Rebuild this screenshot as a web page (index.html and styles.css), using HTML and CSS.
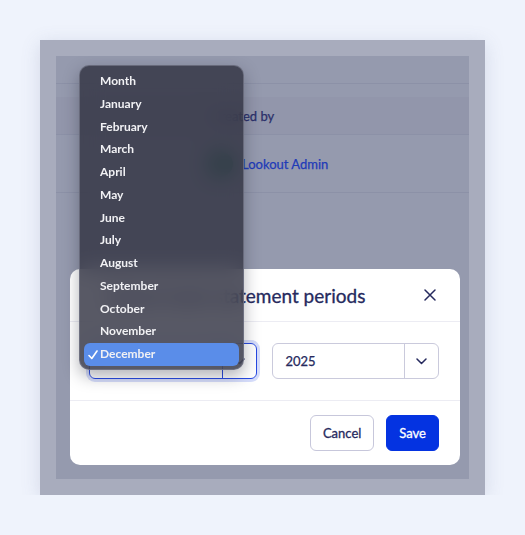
FILE: index.html
```html
<!DOCTYPE html>
<html lang="en">
<head>
	<meta charset="utf-8">
	<meta name="viewport" content="width=device-width, initial-scale=1.0">
	<link rel="stylesheet" href="styles.css">
	<title>Statements</title>
</head>
<body>
	<div class="window">
		<div class="app">
			<div class="toolbar"></div>
			<div class="table">
				<div class="table-head">
					<span class="col-by">Created by</span>
				</div>
				<div class="table-row">
					<span class="col-by">
						<span class="avatar"></span>
						<a class="user">Lookout Admin</a>
					</span>
				</div>
			</div>

			<!-- period picker dialog -->
			<div class="modal">
				<div class="modal-head">
					<h2>Export bank statement periods</h2>
					<button class="close" aria-label="Close">
						<svg width="12" height="12" viewBox="0 0 12 12"><path d="M1 1L11 11M11 1L1 11" stroke="#262a5e" stroke-width="1.5" stroke-linecap="round"/></svg>
					</button>
				</div>
				<div class="modal-body">
					<div class="select focused">
						<span class="select-value"></span>
						<span class="select-arrow">
							<svg width="11" height="7" viewBox="0 0 11 7"><path d="M1 1L5.5 5.5L10 1" fill="none" stroke="#262a5e" stroke-width="1.5" stroke-linecap="round" stroke-linejoin="round"/></svg>
						</span>
					</div>
					<div class="select">
						<span class="select-value">2025</span>
						<span class="select-arrow">
							<svg width="11" height="7" viewBox="0 0 11 7"><path d="M1 1L5.5 5.5L10 1" fill="none" stroke="#262a5e" stroke-width="1.5" stroke-linecap="round" stroke-linejoin="round"/></svg>
						</span>
					</div>
				</div>
				<div class="modal-foot">
					<button class="btn btn-secondary">Cancel</button>
					<button class="btn btn-primary">Save</button>
				</div>
			</div>

			<!-- native month list, opened -->
			<ul class="menu">
				<li>Month</li>
				<li>January</li>
				<li>February</li>
				<li>March</li>
				<li>April</li>
				<li>May</li>
				<li>June</li>
				<li>July</li>
				<li>August</li>
				<li>September</li>
				<li>October</li>
				<li>November</li>
				<li class="selected">
					<svg class="check" width="10" height="10" viewBox="0 0 10 10"><path d="M1 5.5L3.8 8.5L9 1" fill="none" stroke="#fff" stroke-width="1.6" stroke-linecap="round" stroke-linejoin="round"/></svg>
					December
				</li>
			</ul>
		</div>
	</div>
</body>
</html>
```

FILE: styles.css
```css
body {
	margin: 0;
	background: #eff3fc;
	font-family: Lato, "Noto Sans", sans-serif;
	color: #262a5e;
}
.window {
	margin: 40px 0 0 40px;
	width: 413px;
	height: 423px;
	padding: 16px;
	background: #a8acbd;
	box-shadow: 0 4px 18px rgba(90, 100, 140, .18);
}
.app {
	position: relative;
	height: 100%;
	background: #959aae;
	overflow: hidden;
}
.toolbar {
	height: 27px;
	border-bottom: 1px solid #8c91a7;
}
.table {
	margin-top: 13px;
}
/* Lato has no medium cut here, so the regular gets a thin stroke */
.table-head {
	height: 37px;
	display: flex;
	align-items: center;
	background: #9296ab;
	border-bottom: 1px solid #8c91a7;
	font-size: 13px;
	color: #2b306a;
	-webkit-text-stroke: .25px currentColor;
}
.table-row {
	height: 57px;
	display: flex;
	align-items: center;
	border-bottom: 1px solid #8c91a7;
	font-size: 13px;
	-webkit-text-stroke: .25px currentColor;
}
.col-by {
	margin-left: 156px;
	display: flex;
	align-items: center;
	gap: 9px;
}
.table-row .col-by {
	margin-left: 153px;
}
.avatar {
	width: 24px;
	height: 24px;
	border-radius: 50%;
	background: #17704f;
}
.user {
	color: #1f3bb8;
}

.modal {
	position: absolute;
	left: 14px;
	top: 213px;
	width: 390px;
	background: #fff;
	border-radius: 10px;
}
.modal-head {
	height: 52px;
	display: flex;
	align-items: center;
	justify-content: space-between;
	padding: 0 24px 0 39px;
	border-bottom: 1px solid #ececf3;
}
.modal-head h2 {
	margin: 0;
	font-size: 19px;
	font-weight: 400;
	color: #262a5e;
	white-space: nowrap;
	-webkit-text-stroke: .3px currentColor;
}
.close {
	border: 0;
	background: none;
	padding: 0;
	width: 12px;
	height: 12px;
	display: flex;
}
.modal-body {
	display: flex;
	gap: 15px;
	padding: 21px 21px 21px 19px;
	border-bottom: 1px solid #ececf3;
}
.select {
	flex: 1;
	height: 34px;
	display: flex;
	border: 1px solid #cacadc;
	border-radius: 6px;
	font-size: 13px;
	-webkit-text-stroke: .25px currentColor;
}
.select.focused {
	border: 1.5px solid #2749e2;
	box-shadow: 0 0 0 3px rgba(70, 100, 235, .22);
}
.select-value {
	flex: 1;
	display: flex;
	align-items: center;
	padding-left: 13px;
}
.select-arrow {
	width: 33px;
	display: flex;
	align-items: center;
	justify-content: center;
	border-left: 1px solid #cacadc;
}
.focused .select-arrow {
	border-left: 1.5px solid #2749e2;
}
.modal-foot {
	display: flex;
	justify-content: flex-end;
	gap: 12px;
	padding: 14px 21px 14px 19px;
}
.btn {
	height: 36px;
	border-radius: 6px;
	font-family: Lato, sans-serif;
	font-size: 13px;
	padding: 0 12px;
	-webkit-text-stroke: .3px currentColor;
}
.btn-secondary {
	background: #fff;
	border: 1px solid #c7c7db;
	color: #262a5e;
}
.btn-primary {
	background: #0433e1;
	border: 1px solid #0433e1;
	color: #fff;
}

.menu {
	position: absolute;
	left: 23px;
	top: 9px;
	width: 155px;
	margin: 0;
	padding: 4px 4px 3px;
	list-style: none;
	background: rgba(46, 48, 62, .8);
	backdrop-filter: blur(11px);
	border: 1px solid rgba(120, 122, 140, .7);
	border-radius: 10px;
	box-shadow: 0 6px 16px rgba(30, 32, 45, .35);
	font-size: 12px;
	font-weight: 700;
	color: #f1f1f4;
}
.menu li {
	height: 22.75px;
	line-height: 22.75px;
	padding-left: 16px;
	position: relative;
}
.menu li.selected {
	background: #5a8de9;
	border-radius: 6px;
}
.check {
	position: absolute;
	left: 4px;
	top: 7px;
}
```
